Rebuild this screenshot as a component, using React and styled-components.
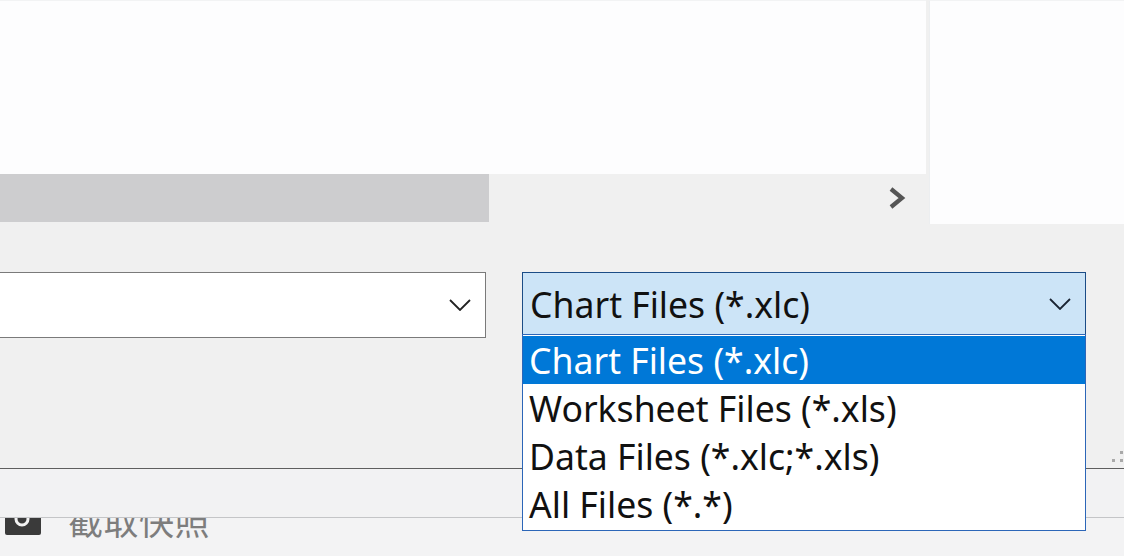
import React from "react";
import styled, { createGlobalStyle } from "styled-components";

const GlobalStyle = createGlobalStyle`
  html, body { margin: 0; padding: 0; background: #f0f0f0; }
  body { font-family: "Noto Sans", "Open Sans", sans-serif; }
  * { box-sizing: border-box; }
`;

const Page = styled.div`
  width: 1124px;
  height: 556px;
  overflow: hidden;
  display: flex;
  flex-direction: column;
  background: #f0f0f0;
`;

const TopRow = styled.div`
  height: 224px;
  display: flex;
  flex-shrink: 0;
`;

const ViewPane = styled.div`
  width: 926px;
  display: flex;
  flex-direction: column;
`;

const Canvas = styled.div`
  height: 174px;
  background: #fdfdfe;
  border-top: 1px solid #f2f3f4;
`;

const HScroll = styled.div`
  height: 48px;
  display: flex;
  align-items: center;
  background: #f0f0f0;
`;

const Thumb = styled.div`
  width: 489px;
  align-self: stretch;
  background: #cdcdcf;
`;

const ScrollArrow = styled.div`
  margin-left: auto;
  width: 50px;
  display: flex;
  justify-content: center;
  padding-right: 8px;
  svg { display: block; }
`;

const SidePanel = styled.div`
  flex: 1;
  margin-left: 3px;
  background: #fdfdfe;
  border-left: 1px solid #eceef0;
  border-top: 1px solid #f2f3f4;
`;

const FormArea = styled.div`
  position: relative;
  height: 244px;
  flex-shrink: 0;
  padding-top: 48px;
`;

const ComboRow = styled.div`
  display: flex;
  align-items: flex-start;
`;

const Combo = styled.div`
  position: relative;
  height: ${(p) => p.$h}px;
  width: ${(p) => p.$w}px;
  margin-left: ${(p) => p.$ml}px;
  display: flex;
  align-items: center;
  padding: 0 14px 0 7px;
  background: ${(p) => (p.$active ? "#cce4f7" : "#ffffff")};
  border: 1px solid ${(p) => (p.$active ? "#1b4c86" : "#7a7a7a")};
  font-size: 35.6px;
  color: #111;
  white-space: nowrap;
  svg { margin-left: auto; display: block; }
`;

const ComboWrap = styled.div`
  position: relative;
  margin-left: 36px;
`;

const DropList = styled.ul`
  position: absolute;
  z-index: 10;
  top: 100%;
  left: 0;
  right: 0;
  margin: -1px 0 0;
  padding: 1px 0 2px;
  list-style: none;
  background: #ffffff;
  border: 1px solid #2c66b8;
`;

const Item = styled.li`
  height: 48px;
  display: flex;
  align-items: center;
  padding-left: 6px;
  font-size: 35.6px;
  white-space: nowrap;
  color: ${(p) => (p.$selected ? "#ffffff" : "#111111")};
  background: ${(p) => (p.$selected ? "#0078d7" : "transparent")};
`;

const Grip = styled.div`
  position: absolute;
  right: 1px;
  bottom: 6px;
  display: grid;
  grid-template-columns: repeat(2, 3px);
  grid-template-rows: repeat(2, 3px);
  gap: 5px;
  span { background: #a9a9a9; }
  span:first-child { visibility: hidden; }
`;

const Divider = styled.div`
  height: 1px;
  flex-shrink: 0;
  background: ${(p) => p.$color};
`;

const StatusArea = styled.div`
  height: 48px;
  flex-shrink: 0;
  background: #f2f2f3;
`;

const BackWindow = styled.div`
  flex: 1;
  overflow: hidden;
  background: #f3f3f4;
`;

const BackRow = styled.div`
  display: flex;
  align-items: flex-end;
  margin-top: -20px;
  padding-left: 5px;
  gap: 27px;
  svg { display: block; margin-bottom: 7px; }
`;

const BackLabel = styled.span`
  font-family: "Noto Sans CJK SC", "Noto Sans", sans-serif;
  font-size: 35px;
  line-height: 44px;
  color: #7d7d7d;
  letter-spacing: 0.5px;
`;

const Chevron = ({ color = "#222" }) => (
  <svg width="22" height="12" viewBox="0 0 22 12">
    <path d="M1 1 L11 11 L21 1" fill="none" stroke={color} strokeWidth="1.8" />
  </svg>
);

const items = [
  "Chart Files (*.xlc)",
  "Worksheet Files (*.xls)",
  "Data Files (*.xlc;*.xls)",
  "All Files (*.*)",
];

export default function App() {
  return (
    <>
      <GlobalStyle />
      <Page>
        <TopRow>
          <ViewPane>
            <Canvas />
            <HScroll>
              <Thumb />
              <ScrollArrow>
                <svg width="20" height="24" viewBox="0 0 20 24">
                  <path d="M4 3 L15 12 L4 21" fill="none" stroke="#555" strokeWidth="4.2" />
                </svg>
              </ScrollArrow>
            </HScroll>
          </ViewPane>
          <SidePanel />
        </TopRow>
        <FormArea>
          <ComboRow>
            <Combo $w={487} $h={66} $ml={-1}>
              <Chevron />
            </Combo>
            <ComboWrap>
              <Combo $w={564} $h={63} $ml={0} $active>
                Chart Files (*.xlc)
                <Chevron color="#1a2433" />
              </Combo>
              <DropList>
                {items.map((t, i) => (
                  <Item key={t} $selected={i === 0}>
                    {t}
                  </Item>
                ))}
              </DropList>
            </ComboWrap>
          </ComboRow>
          <Grip>
            <span />
            <span />
            <span />
            <span />
          </Grip>
        </FormArea>
        <Divider $color="#5e5e5e" />
        <StatusArea />
        <Divider $color="#c4c5c7" />
        <BackWindow>
          <BackRow>
            <svg width="36" height="28" viewBox="0 0 36 28">
              <rect x="0" y="0" width="36" height="28" rx="2" fill="#3a3a3a" />
              <circle cx="17" cy="12" r="6" fill="none" stroke="#f2f2f2" strokeWidth="3" />
            </svg>
            <BackLabel>截取快照</BackLabel>
          </BackRow>
        </BackWindow>
      </Page>
    </>
  );
}
